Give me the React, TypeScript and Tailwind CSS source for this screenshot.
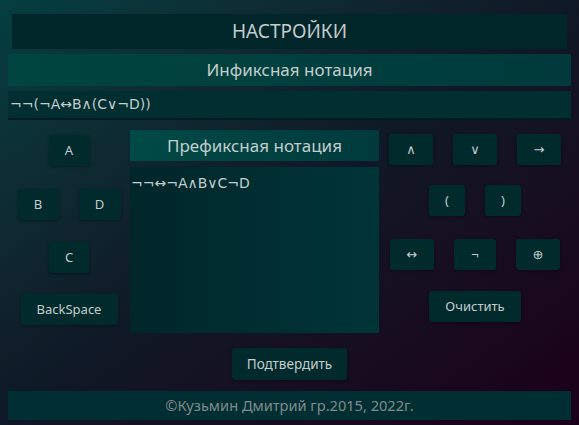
import React from "react";

const font = { fontFamily: "'Noto Sans', 'DejaVu Sans', sans-serif" };
const expr = { fontFamily: "'DejaVu Sans', 'Noto Sans', sans-serif" };

const Key: React.FC<{ label: string; w: string }> = ({ label, w }) => (
  <button
    className={`${w} h-[31px] rounded-[3px] bg-[#012a2c] text-[13px] text-[#c4cccc] shadow-[0_1px_3px_rgba(0,0,0,0.35)] flex items-center justify-center`}
  >
    {label}
  </button>
);

export default function App() {
  return (
    <div
      className="w-[579px] h-[425px] overflow-hidden bg-gradient-to-br from-[#033f40] via-[#0f1826] to-[#1b0019] text-[#c4cccc] flex flex-col pt-[14px]"
      style={font}
    >
      {/* header */}
      <div className="mx-[12px] h-[35px] bg-[#01262a] flex items-center justify-center text-[19px]">
        НАСТРОЙКИ
      </div>

      {/* infix */}
      <div className="mx-[8px] mt-[5px] h-[32px] bg-gradient-to-r from-[#00453f] to-[#003a3c] flex items-center justify-center text-[17px]">
        Инфиксная нотация
      </div>
      <div
        className="mx-[8px] mt-[5px] h-[29px] bg-[#012e31] border-b-2 border-[#001b1e] flex items-center pl-[2px] text-[14px]"
        style={expr}
      >
        ¬¬(¬A↔B∧(C∨¬D))
      </div>

      {/* middle */}
      <div className="flex mt-[10px] pl-[8px] pr-[8px]">
        {/* left keys */}
        <div className="w-[122px] flex flex-col items-center pt-[5px] gap-[22px]">
          <Key label="A" w="w-[41px]" />
          <div className="flex gap-[20px] mt-[1px]">
            <Key label="B" w="w-[41px]" />
            <Key label="D" w="w-[42px]" />
          </div>
          <Key label="C" w="w-[40px]" />
          <div className="-mt-[1px]">
            <Key label="BackSpace" w="w-[97px]" />
          </div>
        </div>

        {/* prefix */}
        <div className="w-[249px] flex flex-col">
          <div className="h-[31px] bg-gradient-to-r from-[#004a46] to-[#003a3c] flex items-center justify-center text-[17px]">
            Префиксная нотация
          </div>
          <div
            className="mt-[6px] h-[166px] bg-gradient-to-r from-[#00262a] to-[#003538] pl-[1px] pt-[7px] text-[14px] leading-[18px]"
            style={expr}
          >
            ¬¬↔¬A∧B∨C¬D
          </div>
        </div>

        {/* right keys */}
        <div className="flex-1 flex flex-col items-center pt-[4px] gap-[21px]">
          <div className="flex gap-[20px]">
            <Key label="∧" w="w-[44px]" />
            <Key label="∨" w="w-[44px]" />
            <Key label="→" w="w-[44px]" />
          </div>
          <div className="flex gap-[20px] -mt-[1px]">
            <Key label="(" w="w-[36px]" />
            <Key label=")" w="w-[36px]" />
          </div>
          <div className="flex gap-[20px] mt-[2px]">
            <Key label="↔" w="w-[44px]" />
            <Key label="¬" w="w-[42px]" />
            <Key label="⊕" w="w-[44px]" />
          </div>
          <Key label="Очистить" w="w-[92px]" />
        </div>
      </div>

      {/* confirm */}
      <div className="flex pl-[232px] mt-[15px]">
        <button className="w-[115px] h-[32px] rounded-[3px] bg-[#012a2c] text-[13.5px] text-[#c4cccc] shadow-[0_1px_3px_rgba(0,0,0,0.35)]">
          Подтвердить
        </button>
      </div>

      {/* footer */}
      <div className="mx-[8px] mt-[11px] h-[29px] bg-[#002f33] flex items-center justify-center text-[14.6px] text-[#818a8a]">
        ©Кузьмин Дмитрий гр.2015, 2022г.
      </div>
    </div>
  );
}
